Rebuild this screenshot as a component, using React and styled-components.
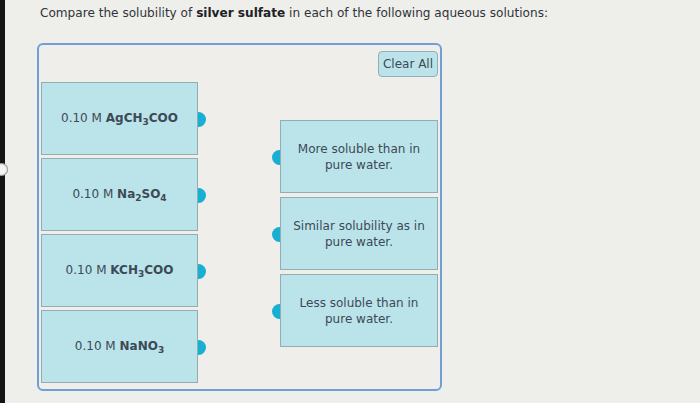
import React from "react";
import styled, { createGlobalStyle } from "styled-components";

const Global = createGlobalStyle`
  html, body { margin: 0; padding: 0; background: #eeeeeb; }
  body { font-family: "DejaVu Sans", Verdana, sans-serif; color: #3b4a55; }
`;

const Page = styled.div`
  display: flex;
  width: 700px;
  height: 403px;
  overflow: hidden;
  background: #eeeeeb;
`;

const Bezel = styled.div`
  position: relative;
  width: 5px;
  flex: none;
  background: #141414;
`;

const BezelKnob = styled.div`
  position: absolute;
  left: -5px;
  top: 163px;
  width: 13px;
  height: 13px;
  border-radius: 50%;
  background: #f4f4f4;
  box-shadow: 0 0 2px #000 inset;
`;

const Content = styled.div`
  flex: 1;
  padding: 6px 0 0 35px;
`;

const Title = styled.p`
  margin: 0;
  font-size: 12.1px;
  line-height: 15px;
  color: #2e3438;
  b { font-weight: bold; color: #1e2226; }
`;

const Panel = styled.div`
  margin: 22px 0 0 -3px;
  width: 397px;
  height: 333px;
  border: 2px solid #6f9fd5;
  border-radius: 6px;
  background: #efeeeb;
  padding: 6px 2px 5px 2px;
  box-sizing: content-box;
  display: flex;
  flex-direction: column;
`;

const Header = styled.div`
  display: flex;
  justify-content: flex-end;
  height: 31px;
  flex: none;
`;

const ClearButton = styled.button`
  height: 26px;
  width: 60px;
  padding: 0;
  border: 1px solid #8fb0b8;
  border-radius: 4px;
  background: #bde3ea;
  font-family: "DejaVu Sans", Verdana, sans-serif;
  font-size: 12px;
  color: #3b4a55;
`;

const Body = styled.div`
  display: flex;
  justify-content: space-between;
  flex: 1;
`;

const Column = styled.div`
  display: flex;
  flex-direction: column;
  gap: ${(p) => p.$gap}px;
  padding-top: ${(p) => p.$top}px;
  width: ${(p) => p.$w}px;
`;

const Card = styled.div`
  position: relative;
  box-sizing: border-box;
  height: ${(p) => p.$h}px;
  border: 1px solid #93adb2;
  background: #bbe3ea;
  display: flex;
  align-items: center;
  justify-content: center;
  text-align: center;
  font-size: 12px;
  line-height: 16px;
  color: #3b4a55;
  b { font-weight: bold; }
  sub { font-size: 9px; vertical-align: -3px; line-height: 0; }
`;

const LeftLabel = styled.span`
  transform: translateY(-1px);
`;

const Dot = styled.span`
  position: absolute;
  top: 50%;
  width: 8px;
  height: 15px;
  margin-top: -7px;
  background: #18afd3;
  ${(p) =>
    p.$side === "right"
      ? "right: -9px; border-radius: 0 8px 8px 0;"
      : "left: -9px; border-radius: 8px 0 0 8px;"}
`;

const solutions = [
  [["Ag"], ["CH", "3"], ["COO"]],
  [["Na", "2"], ["SO", "4"]],
  [["KCH", "3"], ["COO"]],
  [["NaNO", "3"]],
];

const outcomes = [
  ["More soluble than in", "pure water."],
  ["Similar solubility as in", "pure water."],
  ["Less soluble than in", "pure water."],
];

export default function App() {
  return (
    <Page>
      <Global />
      <Bezel>
        <BezelKnob />
      </Bezel>
      <Content>
        <Title>
          Compare the solubility of <b>silver sulfate</b> in each of the following aqueous solutions:
        </Title>
        <Panel>
          <Header>
            <ClearButton>Clear All</ClearButton>
          </Header>
          <Body>
            <Column $gap={3} $top={0} $w={157}>
              {solutions.map((parts, i) => (
                <Card key={i} $h={73}>
                  <LeftLabel>
                    0.10 M{" "}
                    <b>
                      {parts.map(([t, n], j) => (
                        <React.Fragment key={j}>
                          {t}
                          {n && <sub>{n}</sub>}
                        </React.Fragment>
                      ))}
                    </b>
                  </LeftLabel>
                  <Dot $side="right" />
                </Card>
              ))}
            </Column>
            <Column $gap={4} $top={38} $w={158}>
              {outcomes.map((lines, i) => (
                <Card key={i} $h={73}>
                  <span>
                    {lines[0]}
                    <br />
                    {lines[1]}
                  </span>
                  <Dot $side="left" />
                </Card>
              ))}
            </Column>
          </Body>
        </Panel>
      </Content>
    </Page>
  );
}
